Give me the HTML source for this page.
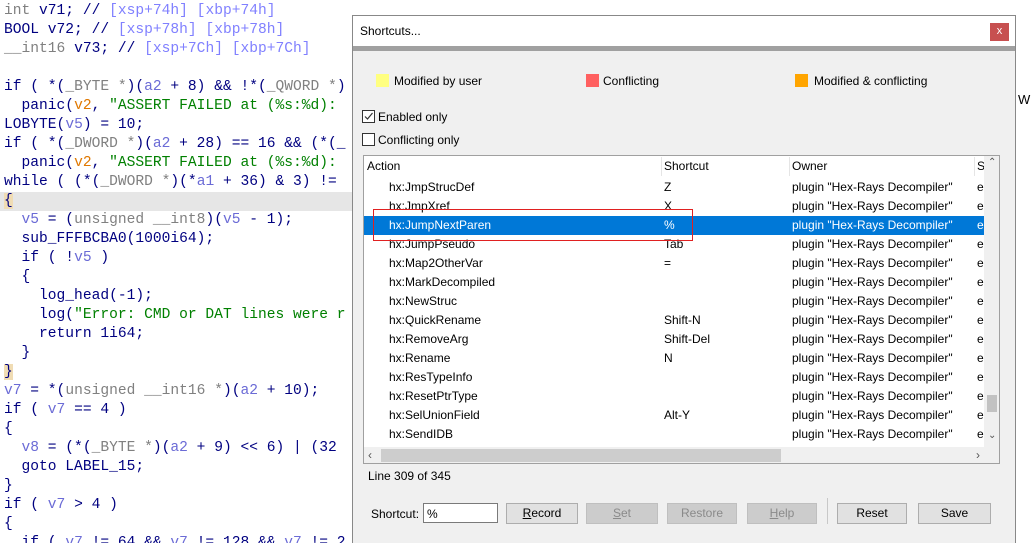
<!DOCTYPE html>
<html><head><style>
*{margin:0;padding:0;box-sizing:border-box}
html,body{width:1032px;height:543px;overflow:hidden}
body{background:#fff;position:relative;font-family:"Liberation Sans",sans-serif}
.code{position:absolute;left:4px;top:2px;font-family:"Liberation Mono",monospace;font-size:14.6px;line-height:19px;color:#000080}
.code div{height:19px;white-space:pre}
.g{color:#808080}.c{color:#8080ff}.v{color:#6b6bd6}.o{color:#e07800}.s{color:#008000}
.hl{position:absolute;left:0;top:192px;width:352px;height:19px;background:#e6e6e6}
.br{background:#f0dcb4}
.dlg{position:absolute;left:352px;top:15px;width:664px;height:540px;background:#f0f0f0;border:1px solid #888;font-size:12px;color:#000}
.title{position:absolute;left:0;top:0;width:662px;height:30px;background:#fff}
.title span{position:absolute;left:7px;top:8px}
.bar{position:absolute;left:0;top:30px;width:662px;height:5px;background:#a0a0a0}
.x{position:absolute;left:637px;top:7px;width:19px;height:18px;background:#c75050;color:#fff;font-size:11px;text-align:center;line-height:17px}
.a{position:absolute;white-space:nowrap}
.sw{position:absolute;width:13px;height:13px}
.cb{position:absolute;width:13px;height:13px;border:1px solid #333;background:#fff}
.tbl{position:absolute;left:10px;top:139px;width:637px;height:309px;border:1px solid #a0a0a0;background:#fff;overflow:hidden}
.row{position:absolute;left:0;width:620px;height:19px;line-height:19px}
.row span{position:absolute}
.btn{position:absolute;top:487px;height:21px;border:1px solid #adadad;background:#e1e1e1;text-align:center;line-height:19px}
.dis{background:#cccccc;border-color:#bfbfbf;color:#8a8a8a}
</style></head><body>
<div class="hl"></div>
<div class="code"><div><span class="g">int</span> v71; // <span class="c">[xsp+74h] [xbp+74h]</span></div><div>BOOL v72; // <span class="c">[xsp+78h] [xbp+78h]</span></div><div><span class="g">__int16</span> v73; // <span class="c">[xsp+7Ch] [xbp+7Ch]</span></div><div></div><div>if ( *(<span class="g">_BYTE *</span>)(<span class="v">a2</span> + 8) &amp;&amp; !*(<span class="g">_QWORD *</span>)</div><div>  panic(<span class="o">v2</span>, <span class="s">"ASSERT FAILED at (%s:%d):</span></div><div>LOBYTE(<span class="v">v5</span>) = 10;</div><div>if ( *(<span class="g">_DWORD *</span>)(<span class="v">a2</span> + 28) == 16 &amp;&amp; (*(_</div><div>  panic(<span class="o">v2</span>, <span class="s">"ASSERT FAILED at (%s:%d):</span></div><div>while ( (*(<span class="g">_DWORD *</span>)(*<span class="v">a1</span> + 36) &amp; 3) != </div><div><span class="br">{</span></div><div>  <span class="v">v5</span> = (<span class="g">unsigned __int8</span>)(<span class="v">v5</span> - 1);</div><div>  sub_FFFBCBA0(1000i64);</div><div>  if ( !<span class="v">v5</span> )</div><div>  {</div><div>    log_head(-1);</div><div>    log(<span class="s">"Error: CMD or DAT lines were r</span></div><div>    return 1i64;</div><div>  }</div><div><span class="br">}</span></div><div><span class="v">v7</span> = *(<span class="g">unsigned __int16 *</span>)(<span class="v">a2</span> + 10);</div><div>if ( <span class="v">v7</span> == 4 )</div><div>{</div><div>  <span class="v">v8</span> = (*(<span class="g">_BYTE *</span>)(<span class="v">a2</span> + 9) &lt;&lt; 6) | (32</div><div>  goto LABEL_15;</div><div>}</div><div>if ( <span class="v">v7</span> &gt; 4 )</div><div>{</div><div>  if ( <span class="v">v7</span> != 64 &amp;&amp; <span class="v">v7</span> != 128 &amp;&amp; <span class="v">v7</span> != 2</div></div>
<div class="a" style="left:1018px;top:92px;font-size:13px">W</div>
<div class="dlg">
<div class="title"><span>Shortcuts...</span><div class="x">x</div></div>
<div class="bar"></div>
<div class="sw" style="left:23px;top:58px;background:#ffff80"></div><div class="a" style="left:41px;top:58px">Modified by user</div>
<div class="sw" style="left:233px;top:58px;background:#ff6060"></div><div class="a" style="left:250px;top:58px">Conflicting</div>
<div class="sw" style="left:442px;top:58px;background:#ffa500"></div><div class="a" style="left:461px;top:58px">Modified &amp; conflicting</div>
<div class="cb" style="left:9px;top:94px"><svg width="11" height="11" style="position:absolute;left:0;top:0"><path d="M2 5.5L4.5 8L9.5 2" stroke="#333" stroke-width="1.2" fill="none"/></svg></div><div class="a" style="left:25px;top:94px">Enabled only</div>
<div class="cb" style="left:9px;top:117px"></div><div class="a" style="left:25px;top:117px">Conflicting only</div>
<div class="tbl">
<div class="row" style="top:1px"><span style="left:3px">Action</span><span style="left:300px">Shortcut</span><span style="left:428px">Owner</span><span style="left:613px">S</span></div>
<div style="position:absolute;left:297px;top:1px;width:1px;height:19px;background:#e5e5e5"></div>
<div style="position:absolute;left:425px;top:1px;width:1px;height:19px;background:#e5e5e5"></div>
<div style="position:absolute;left:610px;top:1px;width:1px;height:19px;background:#e5e5e5"></div>
<div class="row" style="top:22px"><span style="left:25px">hx:JmpStrucDef</span><span style="left:300px">Z</span><span style="left:428px">plugin "Hex-Rays Decompiler"</span><span style="left:613px">e</span></div>
<div class="row" style="top:41px"><span style="left:25px">hx:JmpXref</span><span style="left:300px">X</span><span style="left:428px">plugin "Hex-Rays Decompiler"</span><span style="left:613px">e</span></div>
<div class="row" style="top:60px;background:#0078d7;color:#fff"><span style="left:25px">hx:JumpNextParen</span><span style="left:300px">%</span><span style="left:428px">plugin "Hex-Rays Decompiler"</span><span style="left:613px">e</span></div>
<div class="row" style="top:79px"><span style="left:25px">hx:JumpPseudo</span><span style="left:300px">Tab</span><span style="left:428px">plugin "Hex-Rays Decompiler"</span><span style="left:613px">e</span></div>
<div class="row" style="top:98px"><span style="left:25px">hx:Map2OtherVar</span><span style="left:300px">=</span><span style="left:428px">plugin "Hex-Rays Decompiler"</span><span style="left:613px">e</span></div>
<div class="row" style="top:117px"><span style="left:25px">hx:MarkDecompiled</span><span style="left:428px">plugin "Hex-Rays Decompiler"</span><span style="left:613px">e</span></div>
<div class="row" style="top:136px"><span style="left:25px">hx:NewStruc</span><span style="left:428px">plugin "Hex-Rays Decompiler"</span><span style="left:613px">e</span></div>
<div class="row" style="top:155px"><span style="left:25px">hx:QuickRename</span><span style="left:300px">Shift-N</span><span style="left:428px">plugin "Hex-Rays Decompiler"</span><span style="left:613px">e</span></div>
<div class="row" style="top:174px"><span style="left:25px">hx:RemoveArg</span><span style="left:300px">Shift-Del</span><span style="left:428px">plugin "Hex-Rays Decompiler"</span><span style="left:613px">e</span></div>
<div class="row" style="top:193px"><span style="left:25px">hx:Rename</span><span style="left:300px">N</span><span style="left:428px">plugin "Hex-Rays Decompiler"</span><span style="left:613px">e</span></div>
<div class="row" style="top:212px"><span style="left:25px">hx:ResTypeInfo</span><span style="left:428px">plugin "Hex-Rays Decompiler"</span><span style="left:613px">e</span></div>
<div class="row" style="top:231px"><span style="left:25px">hx:ResetPtrType</span><span style="left:428px">plugin "Hex-Rays Decompiler"</span><span style="left:613px">e</span></div>
<div class="row" style="top:250px"><span style="left:25px">hx:SelUnionField</span><span style="left:300px">Alt-Y</span><span style="left:428px">plugin "Hex-Rays Decompiler"</span><span style="left:613px">e</span></div>
<div class="row" style="top:269px"><span style="left:25px">hx:SendIDB</span><span style="left:428px">plugin "Hex-Rays Decompiler"</span><span style="left:613px">e</span></div>
<div style="position:absolute;left:620px;top:0;width:16px;height:291px;background:#f0f0f0"></div>
<div class="a" style="left:624px;top:1px;font-size:10px;color:#555">&#8963;</div>
<div style="position:absolute;left:623px;top:239px;width:10px;height:17px;background:#c2c2c2"></div>
<div class="a" style="left:624px;top:274px;font-size:10px;color:#555">&#8964;</div>
<div style="position:absolute;left:0;top:291px;width:636px;height:17px;background:#f0f0f0"></div>
<div style="position:absolute;left:17px;top:293px;width:400px;height:13px;background:#cdcdcd"></div>
<div class="a" style="left:4px;top:292px;color:#555">&#8249;</div>
<div class="a" style="left:612px;top:292px;color:#555">&#8250;</div>
</div>
<div class="a" style="left:15px;top:453px">Line 309 of 345</div>
<div class="a" style="left:18px;top:491px">Shortcut:</div>
<div style="position:absolute;left:70px;top:487px;width:75px;height:20px;border:1px solid #7a7a7a;background:#fff;padding:3px 3px">%</div>
<div class="btn" style="left:153px;width:72px"><u>R</u>ecord</div>
<div class="btn dis" style="left:233px;width:72px"><u>S</u>et</div>
<div class="btn dis" style="left:314px;width:70px">Restore</div>
<div class="btn dis" style="left:394px;width:70px"><u>H</u>elp</div>
<div style="position:absolute;left:474px;top:482px;width:1px;height:26px;background:#c8c8c8"></div>
<div class="btn" style="left:484px;width:70px">Reset</div>
<div class="btn" style="left:565px;width:73px">Save</div>
</div>
<div style="position:absolute;left:373px;top:209px;width:320px;height:32px;border:1px solid #e02020"></div>
</body></html>
